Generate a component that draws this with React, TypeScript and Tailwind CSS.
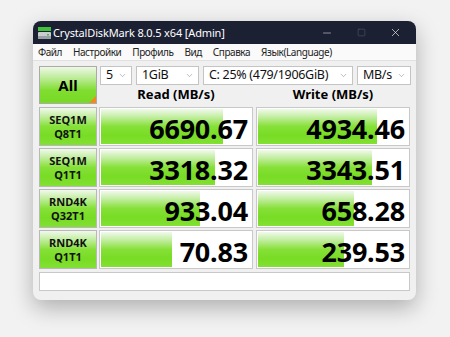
import { ChevronDown, Minus, Square, X } from 'lucide-react';

const rows = [
  { l1: 'SEQ1M', l2: 'Q8T1', read: '6690.67', rp: 81, write: '4934.46', wp: 79 },
  { l1: 'SEQ1M', l2: 'Q1T1', read: '3318.32', rp: 76, write: '3343.51', wp: 76 },
  { l1: 'RND4K', l2: 'Q32T1', read: '933.04', rp: 66, write: '658.28', wp: 64 },
  { l1: 'RND4K', l2: 'Q1T1', read: '70.83', rp: 47, write: '239.53', wp: 57 },
];

const greenBar =
  'bg-[linear-gradient(to_bottom,#f1f9ec_0%,#c4eea4_22%,#86e038_50%,#78dc24_75%,#82e034_100%)]';

function Select({ w, text }: { w: string; text: string }) {
  return (
    <div className={`${w} h-[19px] bg-white border border-[#c4c4c4] flex items-center justify-between pl-[5px] pr-[4px]`}>
      <span className="text-[12.5px] leading-none text-[#111] whitespace-nowrap tracking-[-0.3px]">{text}</span>
      <ChevronDown className="w-[9px] h-[9px] shrink-0 text-[#8a8a8a]" strokeWidth={1.5} />
    </div>
  );
}

function Result({ value, pct }: { value: string; pct: number }) {
  return (
    <div className="relative w-[154px] h-[39px] bg-white border border-[#c8c8c8] p-[1px] flex">
      <div className={`h-full ${greenBar}`} style={{ width: `${pct}%` }} />
      <span className="absolute right-[4px] top-0 bottom-0 flex items-center pt-[3px] text-[27px] font-bold leading-none text-black tracking-[-0.2px]">
        {value}
      </span>
    </div>
  );
}

export default function App() {
  return (
    <div
      className="w-[450px] h-[337px] bg-[#f2f2f2] pt-[21px] pl-[33px] overflow-hidden"
      style={{ fontFamily: '"Noto Sans", "Open Sans", sans-serif' }}
    >
      <div className="w-[383px] h-[279px] rounded-[8px] overflow-hidden bg-[#f0f0f0] shadow-[0_8px_22px_rgba(0,0,0,0.28)] flex flex-col">
        {/* Title bar */}
        <div className="h-[23px] bg-[#1c2033] flex items-center pl-[5px]">
          <svg width="13" height="12" viewBox="0 0 13 12" className="shrink-0">
            <rect x="0" y="0" width="13" height="4" fill="#3fc23a" />
            <rect x="0" y="5" width="13" height="7" rx="1" fill="#c9ccd1" />
            <rect x="0" y="9" width="13" height="3" fill="#9aa0a8" />
            <rect x="9" y="7" width="2" height="1.5" fill="#3fc23a" />
          </svg>
          <span className="ml-[2px] text-[11px] text-white leading-none tracking-[-0.15px]">
            CrystalDiskMark 8.0.5 x64 [Admin]
          </span>
          <div className="ml-auto flex items-center h-full">
            <div className="w-[34px] flex justify-center">
              <Minus className="w-[12px] h-[12px] text-[#d8d8d8]" strokeWidth={1.2} />
            </div>
            <div className="w-[34px] flex justify-center">
              <Square className="w-[9px] h-[9px] text-[#5a5f70]" strokeWidth={1.4} />
            </div>
            <div className="w-[38px] flex justify-center pr-[4px]">
              <X className="w-[13px] h-[13px] text-[#e8e8e8]" strokeWidth={1.3} />
            </div>
          </div>
        </div>

        {/* Menu bar */}
        <div className="h-[17px] bg-[#fafafa] border-b border-[#e0e0e0] flex items-center pl-[5px] gap-[11px] text-[10px] text-[#222] leading-none tracking-[-0.45px]">
          <span>Файл</span>
          <span>Настройки</span>
          <span>Профиль</span>
          <span>Вид</span>
          <span>Справка</span>
          <span>Язык(Language)</span>
        </div>

        {/* Body */}
        <div className="flex flex-col pl-[6px] pt-[5px]">
          <div className="flex">
            <div className="relative w-[58px] h-[38px] border border-[#aaa] bg-[linear-gradient(to_bottom,#eef8e6_0%,#b6ea8c_35%,#80dd30_65%,#78da24_100%)] flex items-center justify-center">
              <span className="text-[15px] font-bold text-black leading-none">All</span>
              <div className="absolute right-0 bottom-0 w-0 h-0 border-l-[7px] border-l-transparent border-b-[7px] border-b-[#f08a1c]" />
            </div>
            <div className="flex flex-col ml-[3px]">
              <div className="flex gap-[4px]">
                <Select w="w-[32px]" text="5" />
                <Select w="w-[63px]" text="1GiB" />
                <Select w="w-[150px]" text="C: 25% (479/1906GiB)" />
                <Select w="w-[54px]" text="MB/s" />
              </div>
              <div className="flex h-[19px] items-center -ml-[1px]">
                <div className="w-[154px] text-center text-[13px] font-bold leading-none">Read (MB/s)</div>
                <div className="w-[157px] text-center text-[13px] font-bold leading-none pl-[3px]">Write (MB/s)</div>
              </div>
            </div>
          </div>

          <div className="flex flex-col gap-[2px] mt-[3px]">
            {rows.map((r, i) => (
              <div key={i} className="flex">
                <div className={`w-[58px] h-[39px] border border-[#b8b8b8] ${greenBar} flex flex-col items-center justify-center gap-[3px]`}>
                  <span className="text-[11px] font-bold leading-none text-[#111]">{r.l1}</span>
                  <span className="text-[11px] font-bold leading-none text-[#111]">{r.l2}</span>
                </div>
                <div className="ml-[2px]">
                  <Result value={r.read} pct={r.rp} />
                </div>
                <div className="ml-[3px]">
                  <Result value={r.write} pct={r.wp} />
                </div>
              </div>
            ))}
          </div>

          <div className="w-[371px] h-[19px] mt-[3px] bg-white border border-[#c8c8c8]" />
        </div>
      </div>
    </div>
  );
}
